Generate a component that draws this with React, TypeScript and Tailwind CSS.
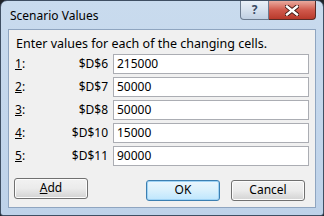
import React from "react";

const rows = [
  { n: "1", ref: "$D$6", value: "215000" },
  { n: "2", ref: "$D$7", value: "50000" },
  { n: "3", ref: "$D$8", value: "50000" },
  { n: "4", ref: "$D$10", value: "15000" },
  { n: "5", ref: "$D$11", value: "90000" },
];

function CaptionButtons() {
  return (
    <div className="flex self-start">
      <div className="w-[29px] h-[19px] flex items-center justify-center border border-t-0 border-[#6b7b90] rounded-bl-[4px] bg-gradient-to-b from-[#e9f0f8] via-[#d6e1ee] to-[#bfcfe2] text-[#3a4a63] text-[12px] font-bold leading-none">
        ?
      </div>
      <div className="w-[47px] h-[19px] flex items-center justify-center border border-t-0 border-l-0 border-[#5a2b26] rounded-br-[4px] bg-gradient-to-b from-[#e9a99e] via-[#d0594c] to-[#b8392b]">
        <svg width="14" height="11" viewBox="0 0 14 11">
          <path d="M2 1.5 L12 9.5 M12 1.5 L2 9.5" stroke="#3b1410" strokeWidth="4.2" strokeLinecap="square" />
          <path d="M2 1.5 L12 9.5 M12 1.5 L2 9.5" stroke="#ffffff" strokeWidth="2.4" strokeLinecap="square" />
        </svg>
      </div>
    </div>
  );
}

function Btn({ children, primary }: { children: React.ReactNode; primary?: boolean }) {
  return (
    <button
      className={
        primary
          ? "w-[74px] h-[21px] rounded-[3px] border border-[#3c7fb1] bg-gradient-to-b from-[#eaf6fd] via-[#d9f0fc] to-[#bee6fd] text-[12px] text-black shadow-[inset_0_0_0_1px_#9fd3f5]"
          : "w-[74px] h-[21px] rounded-[3px] border border-[#707070] bg-gradient-to-b from-[#f2f2f2] via-[#ebebeb] to-[#d3d3d3] text-[12px] text-black shadow-[inset_0_0_0_1px_#fcfcfc]"
      }
    >
      {children}
    </button>
  );
}

export default function App() {
  return (
    <div
      className="w-[324px] h-[216px] bg-[#1f2329]"
      style={{ fontFamily: '"Noto Sans", "Open Sans", sans-serif' }}
    >
      <div className="h-full flex flex-col rounded-t-[7px] rounded-b-[3px] border border-[#3f4f63] bg-gradient-to-b from-[#c9dbee] to-[#bed2e9]">
        <div className="h-[28px] flex justify-between pl-[9px] pr-[7px]">
          <span className="mt-[7px] text-[12px] leading-[16px] text-black">Scenario Values</span>
          <CaptionButtons />
        </div>
        <div className="flex-1 mx-[7px] mb-[7px] border border-[#8fa5c0] bg-[#f0f0f0] flex flex-col">
          <p className="mt-[6px] ml-[7px] text-[12.5px] leading-[16px] text-black">
            Enter values for each of the changing cells.
          </p>
          <div className="mt-[2px] flex flex-col gap-[3px] pr-[6px]">
            {rows.map((r) => (
              <div key={r.n} className="flex items-center h-[20px]">
                <span className="w-[40px] pl-[6px] text-[12px] text-black">
                  <span className="underline">{r.n}</span>:
                </span>
                <span className="w-[59px] text-right text-[12px] text-black">{r.ref}</span>
                <div className="ml-[5px] flex-1 h-[20px] border border-[#abadb3] bg-white flex items-center pl-[3px] text-[12px] text-black">
                  {r.value}
                </div>
              </div>
            ))}
          </div>
          <div className="mt-[10px] flex items-center pl-[5px]">
            <Btn>
              <span className="underline">A</span>dd
            </Btn>
            <div className="ml-[58px]">
              <Btn primary>OK</Btn>
            </div>
            <div className="ml-[11px]">
              <Btn>Cancel</Btn>
            </div>
          </div>
        </div>
      </div>
    </div>
  );
}
